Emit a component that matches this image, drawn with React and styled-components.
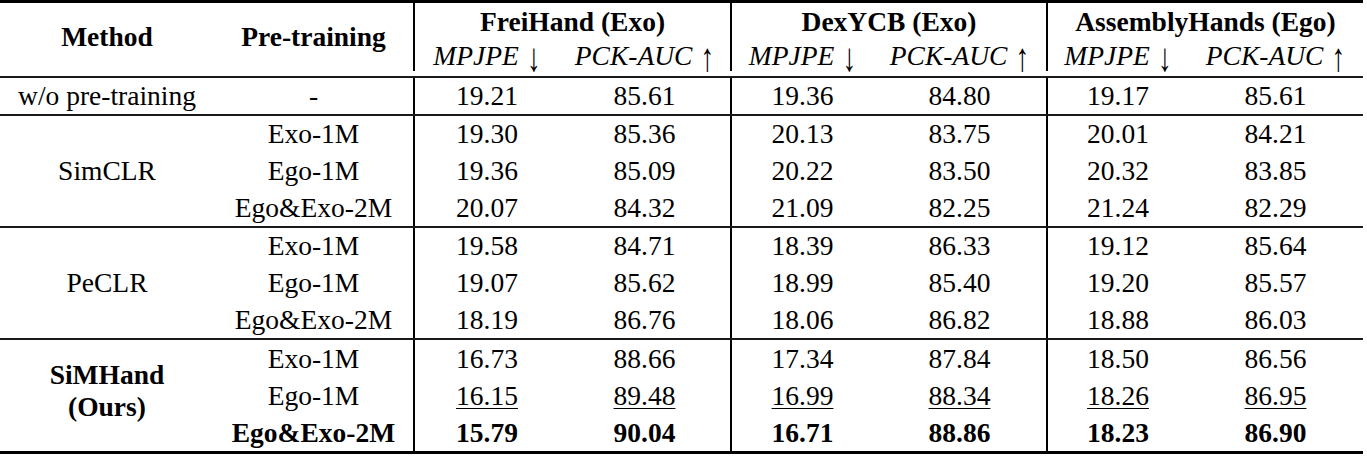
import React from "react";
import styled, { createGlobalStyle } from "styled-components";

const GlobalStyle = createGlobalStyle`
  body {
    margin: 0;
    background: #fff;
  }
`;

const COLS = "214px 201px 144px 173px 141px 175px 140px 175px";

const Table = styled.div`
  width: 1363px;
  border-top: 3px solid #000;
  border-bottom: 3px solid #000;
  font-family: "Liberation Serif", "Times New Roman", serif;
  font-size: 27.5px;
  color: #000;
`;

const Section = styled.div`
  display: grid;
  grid-template-columns: ${COLS};
  grid-template-rows: ${(p) => p.$rows};
  height: ${(p) => p.$height || "auto"};
  padding-bottom: ${(p) => p.$pb || "0"};
  border-top: ${(p) => (p.$rule ? "2px solid #1a1a1a" : "none")};
`;

const Cell = styled.div`
  display: flex;
  align-items: center;
  justify-content: center;
  text-align: center;
  white-space: nowrap;
  line-height: ${(p) => p.$lh || "normal"};
  padding-bottom: ${(p) => p.$pb || "0"};
  font-weight: ${(p) => (p.$bold ? 700 : 400)};
  border-right: ${(p) => (p.$sep ? "2px solid #000" : "none")};
  grid-column: ${(p) => p.$col || "auto"};
  grid-row: ${(p) => p.$row || "auto"};
`;

const Metric = styled.span`
  font-style: italic;
`;

const Arrow = styled.span`
  display: inline-block;
  font-style: normal;
  margin-left: 8px;
  transform: scaleY(1.45) translateY(1px);
`;

const Under = styled.span`
  text-decoration: underline;
  text-decoration-thickness: 1px;
  text-underline-offset: 3px;
`;

const groups = [
  {
    method: "SimCLR",
    rows: [
      ["Exo-1M", "19.30", "85.36", "20.13", "83.75", "20.01", "84.21"],
      ["Ego-1M", "19.36", "85.09", "20.22", "83.50", "20.32", "83.85"],
      ["Ego&Exo-2M", "20.07", "84.32", "21.09", "82.25", "21.24", "82.29"],
    ],
    height: "110px",
  },
  {
    method: "PeCLR",
    rows: [
      ["Exo-1M", "19.58", "84.71", "18.39", "86.33", "19.12", "85.64"],
      ["Ego-1M", "19.07", "85.62", "18.99", "85.40", "19.20", "85.57"],
      ["Ego&Exo-2M", "18.19", "86.76", "18.06", "86.82", "18.88", "86.03"],
    ],
    height: "110px",
  },
  {
    method: "SiMHand",
    ours: true,
    rows: [
      ["Exo-1M", "16.73", "88.66", "17.34", "87.84", "18.50", "86.56"],
      ["Ego-1M", "16.15", "89.48", "16.99", "88.34", "18.26", "86.95"],
      ["Ego&Exo-2M", "15.79", "90.04", "16.71", "88.86", "18.23", "86.90"],
    ],
    height: "111px",
    underline: 1,
    bold: 2,
  },
];

const datasets = ["FreiHand (Exo)", "DexYCB (Exo)", "AssemblyHands (Ego)"];

const Header = () => (
  <Section $rows="37px 31px" $pb="5px">
    <Cell $bold $row="1 / 3">Method</Cell>
    <Cell $bold $row="1 / 3" $sep>
      Pre-training
    </Cell>
    {datasets.map((d, i) => (
      <Cell key={d} $bold $col="span 2" $sep={i < 2}>
        {d}
      </Cell>
    ))}
    {datasets.map((d, i) => (
      <React.Fragment key={d}>
        <Cell>
          <Metric>MPJPE</Metric>
          <Arrow>↓</Arrow>
        </Cell>
        <Cell $sep={i < 2}>
          <Metric>PCK-AUC</Metric>
          <Arrow>↑</Arrow>
        </Cell>
      </React.Fragment>
    ))}
  </Section>
);

const Group = ({ g }) => (
  <Section $rule $rows="repeat(3, 1fr)" $height={g.height}>
    <Cell $row="1 / 4" $bold={g.ours} $lh="32px" $pb={g.ours ? "9px" : "0"}>
      {g.ours ? (
        <div>
          SiMHand
          <br />
          (Ours)
        </div>
      ) : (
        g.method
      )}
    </Cell>
    {g.rows.map((r, ri) => (
      <React.Fragment key={ri}>
        {r.map((v, ci) => (
          <Cell
            key={ci}
            $col={`${ci + 2}`}
            $row={`${ri + 1}`}
            $sep={ci === 0 || ci === 2 || ci === 4}
            $bold={g.bold === ri}
          >
            {g.underline === ri && ci > 0 ? <Under>{v}</Under> : v}
          </Cell>
        ))}
      </React.Fragment>
    ))}
  </Section>
);

export default function App() {
  return (
    <>
      <GlobalStyle />
      <Table>
        <Header />
        <Section $rule $rows="36px">
          <Cell>w/o pre-training</Cell>
          <Cell $sep>-</Cell>
          <Cell>19.21</Cell>
          <Cell $sep>85.61</Cell>
          <Cell>19.36</Cell>
          <Cell $sep>84.80</Cell>
          <Cell>19.17</Cell>
          <Cell>85.61</Cell>
        </Section>
        {groups.map((g) => (
          <Group key={g.method} g={g} />
        ))}
      </Table>
    </>
  );
}
